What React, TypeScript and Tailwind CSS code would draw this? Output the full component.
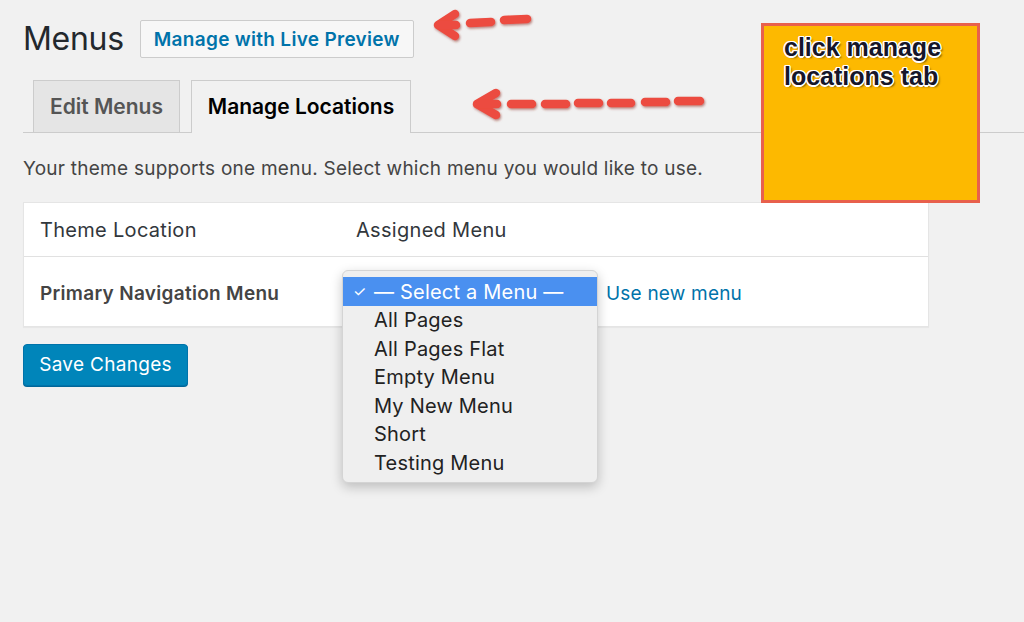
import React from "react";

const font = { fontFamily: "Inter, 'Noto Sans', Roboto, sans-serif" };

function Arrows() {
  const dash = "#ec4b3f";
  return (
    <svg className="absolute left-0 top-0 pointer-events-none" width="1024" height="622" viewBox="0 0 1024 622">
      <defs>
        <filter id="sh" x="-20%" y="-50%" width="140%" height="200%">
          <feDropShadow dx="1" dy="1.5" stdDeviation="1" floodColor="#8a2a22" floodOpacity="0.55" />
        </filter>
      </defs>
      <g filter="url(#sh)" stroke={dash} strokeLinecap="round" strokeLinejoin="round" fill="none">
        <path d="M455 14 L438 25 L455 36" strokeWidth="8.5" />
        <path d="M440 25 L456 25" strokeWidth="8.5" />
        <path d="M470 23 L491 22" strokeWidth="8.5" />
        <path d="M504 20 L527 19" strokeWidth="8.5" />
      </g>
      <g filter="url(#sh)" stroke={dash} strokeLinecap="round" strokeLinejoin="round" fill="none">
        <path d="M496 93 L477 104 L496 115" strokeWidth="8.5" />
        <path d="M480 104 L497 104" strokeWidth="8.5" />
        <path d="M511 104 L532 104" strokeWidth="8.5" />
        <path d="M545 104 L566 104" strokeWidth="8.5" />
        <path d="M578 103 L599 103" strokeWidth="8.5" />
        <path d="M611 103 L631 103" strokeWidth="8.5" />
        <path d="M645 102 L666 102" strokeWidth="8.5" />
        <path d="M678 101 L700 101" strokeWidth="8.5" />
      </g>
    </svg>
  );
}

function Dropdown() {
  const items = ["All Pages", "All Pages Flat", "Empty Menu", "My New Menu", "Short", "Testing Menu"];
  return (
    <div className="absolute left-[342px] top-[270px] w-[256px] h-[213px] bg-[#efefef] rounded-[6px] border border-[#d4d4d4] shadow-[0_4px_12px_rgba(0,0,0,0.22)] pt-[6px]">
      <div className="h-[29px] bg-[#4a90f0] text-white flex items-center text-[20px] tracking-[0.2px] leading-none">
        <span className="w-[31px] pl-[10px] text-[15px]">✓</span>
        <span>— Select a Menu —</span>
      </div>
      {items.map((t) => (
        <div key={t} className="h-[28.5px] flex items-center pl-[31px] text-[20px] tracking-[0.2px] text-[#222] leading-none">
          {t}
        </div>
      ))}
    </div>
  );
}

export default function App() {
  return (
    <div className="relative w-full h-[622px] overflow-hidden bg-[#f1f1f1] text-[#444]" style={font}>
      <div className="flex items-center pl-[23px] pt-[20px]">
        <h1 className="text-[32px] leading-none text-[#23282d] font-normal tracking-[-0.3px]">Menus</h1>
        <button className="ml-[16px] h-[38px] px-[13px] pt-[2px] border border-[#ccc] bg-[#f7f7f7] rounded-[2px] text-[#0073aa] text-[19px] tracking-[0.3px] font-semibold">
          Manage with Live Preview
        </button>
      </div>

      <div className="mt-[22px] ml-[23px] border-b border-[#ccc] flex items-end pl-[10px] gap-[11px] h-[53px]">
        <div className="h-[52px] w-[147px] bg-[#e5e5e5] border border-b-0 border-[#ccc] flex items-center justify-center text-[21px] font-semibold text-[#555]">
          Edit Menus
        </div>
        <div className="h-[53px] w-[220px] bg-[#f1f1f1] border border-b-0 border-[#ccc] -mb-px flex items-center justify-center text-[21px] font-semibold text-[#000]">
          Manage Locations
        </div>
      </div>

      <p className="ml-[23px] mt-[23px] text-[19px] tracking-[0.25px] leading-[25px] text-[#444]">
        Your theme supports one menu. Select which menu you would like to use.
      </p>

      <div className="ml-[23px] mt-[21px] w-[906px] bg-white border border-[#e5e5e5] shadow-[0_1px_1px_rgba(0,0,0,0.04)]">
        <div className="h-[54px] flex items-center border-b border-[#e1e1e1] text-[20px] tracking-[0.3px] text-[#32373c] pt-[1px]">
          <div className="w-[332px] pl-[16px]">Theme Location</div>
          <div>Assigned Menu</div>
        </div>
        <div className="h-[69px] flex items-center text-[19px] pt-[5px]">
          <div className="w-[332px] pl-[16px] font-semibold text-[#444] tracking-[0.3px]">Primary Navigation Menu</div>
          <div className="w-[250px]"></div>
          <a className="text-[#0073aa] text-[19px] tracking-[0.2px]">Use new menu</a>
        </div>
      </div>

      <button className="ml-[23px] mt-[17px] h-[42px] w-[165px] bg-[#0085ba] border border-[#0073aa] rounded-[4px] text-white text-[19px] tracking-[0.3px] shadow-[0_1px_0_#006799]">
        Save Changes
      </button>

      <div className="absolute left-[761px] top-[23px] w-[219px] h-[180px] bg-[#fdb900] border-[3px] border-[#e8604c] pl-[20px] pt-[7px]">
        <div
          className="text-[25px] leading-[29px] font-bold text-[#16162a] tracking-[0px]"
          style={{
            fontFamily: "'Liberation Sans', Arial, sans-serif",
            textShadow:
              "1.5px 0 0 #fff, -1.5px 0 0 #fff, 0 1.5px 0 #fff, 0 -1.5px 0 #fff, 1px 1px 0 #fff, -1px -1px 0 #fff, 1px -1px 0 #fff, -1px 1px 0 #fff, 2px 2px 2px rgba(0,0,0,0.55)",
          }}
        >
          click manage
          <br />
          locations tab
        </div>
      </div>

      <Arrows />
      <Dropdown />
    </div>
  );
}
